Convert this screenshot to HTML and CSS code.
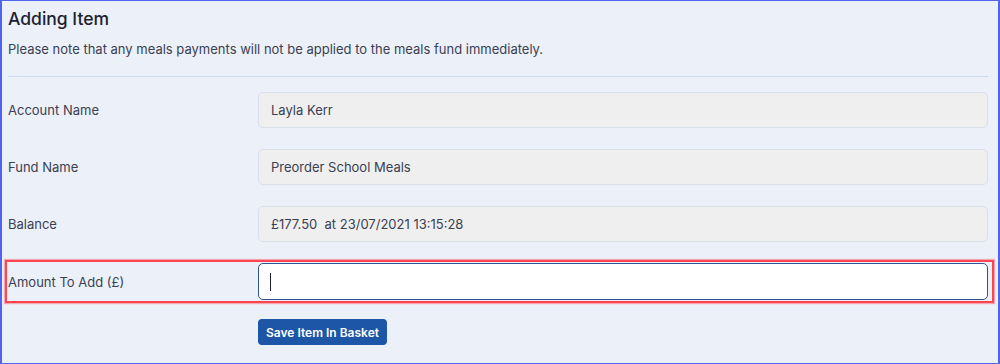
FILE: index.html
```html
<!DOCTYPE html>
<html lang="en">
<head>
<meta charset="utf-8">
<title>Adding Item</title>
<link rel="stylesheet" href="styles.css">
</head>
<body>
<div class="page">
  <header class="head">
    <h1 class="title">Adding Item</h1>
    <p class="note">Please note that any meals payments will not be applied to the meals fund immediately.</p>
  </header>
  <div class="form">
    <div class="row">
      <div class="label">Account Name</div>
      <div class="field">Layla Kerr</div>
    </div>
    <div class="row">
      <div class="label">Fund Name</div>
      <div class="field">Preorder School Meals</div>
    </div>
    <div class="row">
      <div class="label">Balance</div>
      <div class="field">£177.50&nbsp; at 23/07/2021 13:15:28</div>
    </div>
    <div class="row highlight">
      <div class="label">Amount To Add (£)</div>
      <div class="input"><span class="caret"></span></div>
    </div>
    <div class="row actions">
      <div></div>
      <div><button class="btn">Save Item In Basket</button></div>
    </div>
  </div>
</div>
</body>
</html>
```

FILE: styles.css
```css
* { box-sizing: border-box; }
html, body { margin: 0; padding: 0; }
body {
  font-family: "Inter", "Lato", "Liberation Sans", sans-serif;
  color: #3a4152;
  background: #ecf0f8;
}
.page {
  width: 1000px;
  height: 364px;
  border-style: solid;
  border-color: #4f65f0;
  border-width: 1px 2px 1px 2px;
  background: #ecf0f8;
  padding: 0 10px 0 6px;
}
.head {
  border-bottom: 1px solid #c9d9f1;
  padding-top: 6px;
  height: 76px;
}
.title {
  margin: 0;
  font-size: 17.5px;
  font-weight: 500;
  color: #1b2130;
  line-height: 24px;
}
.note {
  margin: 8px 0 0;
  font-size: 13px;
  line-height: 20px;
  color: #3a4152;
}
.form {
  padding-top: 15px;
}
.row {
  display: grid;
  grid-template-columns: 250px 730px;
  align-items: center;
  margin-bottom: 21px;
  font-size: 13px;
}
.label {
  color: #3a4152;
}
.field {
  height: 36px;
  display: flex;
  align-items: center;
  padding-left: 12px;
  background: #efefef;
  border: 1px solid #d9e0ea;
  border-radius: 5px;
  color: #3a4152;
}
.highlight {
  margin: -3px -6px 16px -3px;
  padding: 1px 4px 1px 1px;
  border: 2px solid #ff4452;
  box-shadow: 0 0 1px 1px rgba(255, 80, 90, 0.45);
}
.input {
  height: 37px;
  background: #fff;
  border: 1px solid #2f5494;
  border-radius: 5px;
  display: flex;
  align-items: center;
  padding-left: 11px;
}
.caret {
  display: block;
  width: 1px;
  height: 18px;
  background: #1b2130;
}
.actions { margin: 0; }
.btn {
  font-family: inherit;
  font-size: 12px;
  font-weight: 600;
  color: #fff;
  background: #1d56a6;
  border: none;
  border-radius: 4px;
  height: 26px;
  padding: 0 6px;
  width: 129px;
}
```
